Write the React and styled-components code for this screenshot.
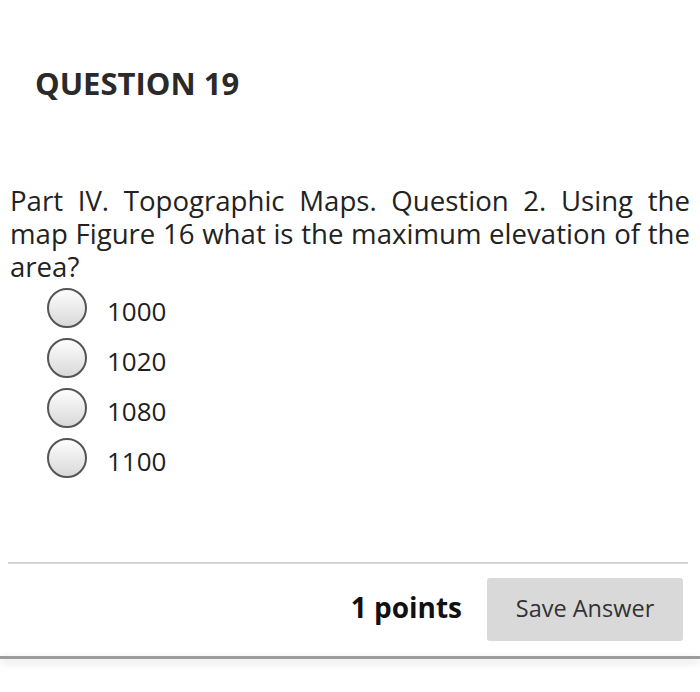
import React from "react";
import styled, { createGlobalStyle } from "styled-components";

const Global = createGlobalStyle`
  html, body { margin: 0; padding: 0; background: #fff; }
  body { font-family: "Open Sans", "Liberation Sans", sans-serif; color: #222; }
`;

const Page = styled.div`
  width: 700px;
  height: 692px;
  background: #fff;
  overflow: hidden;
  display: flex;
  flex-direction: column;
`;

const Heading = styled.h1`
  margin: 63px 0 0 35px;
  font-size: 31px;
  line-height: 40px;
  font-weight: 700;
  color: #2a2a2a;
`;

const Prompt = styled.p`
  margin: 81px 10px 0 10px;
  font-size: 27.6px;
  line-height: 33px;
  text-align: justify;
  color: #222;
`;

const Options = styled.div`
  display: flex;
  flex-direction: column;
  margin-left: 47px;
`;

const Option = styled.label`
  display: flex;
  align-items: center;
  height: 50px;
  gap: 20px;
`;

const Radio = styled.span`
  width: 40px;
  height: 40px;
  box-sizing: border-box;
  border-radius: 50%;
  border: 2px solid #555;
  background: linear-gradient(#fdfdfd, #d9d9d9);
  flex: none;
`;

const OptionText = styled.span`
  font-size: 26px;
  padding-top: 6px;
  color: #1e1e1e;
`;

const Divider = styled.hr`
  margin: 79px 12px 0 8px;
  border: none;
  height: 2px;
  background: #d4d4d4;
`;

const Footer = styled.div`
  display: flex;
  justify-content: flex-end;
  align-items: center;
  gap: 25px;
  padding: 14px 17px 0 0;
`;

const Points = styled.span`
  font-size: 28px;
  font-weight: 700;
  color: #111;
  padding-bottom: 6px;
`;

const SaveButton = styled.button`
  width: 196px;
  height: 63px;
  border: none;
  border-radius: 3px;
  background: #d9d9d9;
  font-family: "Open Sans", "Liberation Sans", sans-serif;
  font-size: 23.5px;
  color: #333;
  padding: 0 0 4px;
`;

const BottomBar = styled.div`
  margin-top: 15px;
  height: 3px;
  background: #9c9c9c;
  box-shadow: 0 3px 8px rgba(0, 0, 0, 0.18);
`;

const options = ["1000", "1020", "1080", "1100"];

export default function App() {
  return (
    <Page>
      <Global />
      <Heading>QUESTION 19</Heading>
      <Prompt>
        Part IV. Topographic Maps. Question 2. Using the map Figure 16 what is
        the maximum elevation of the area?
      </Prompt>
      <Options>
        {options.map((o) => (
          <Option key={o}>
            <Radio />
            <OptionText>{o}</OptionText>
          </Option>
        ))}
      </Options>
      <Divider />
      <Footer>
        <Points>1 points</Points>
        <SaveButton>Save Answer</SaveButton>
      </Footer>
      <BottomBar />
    </Page>
  );
}
